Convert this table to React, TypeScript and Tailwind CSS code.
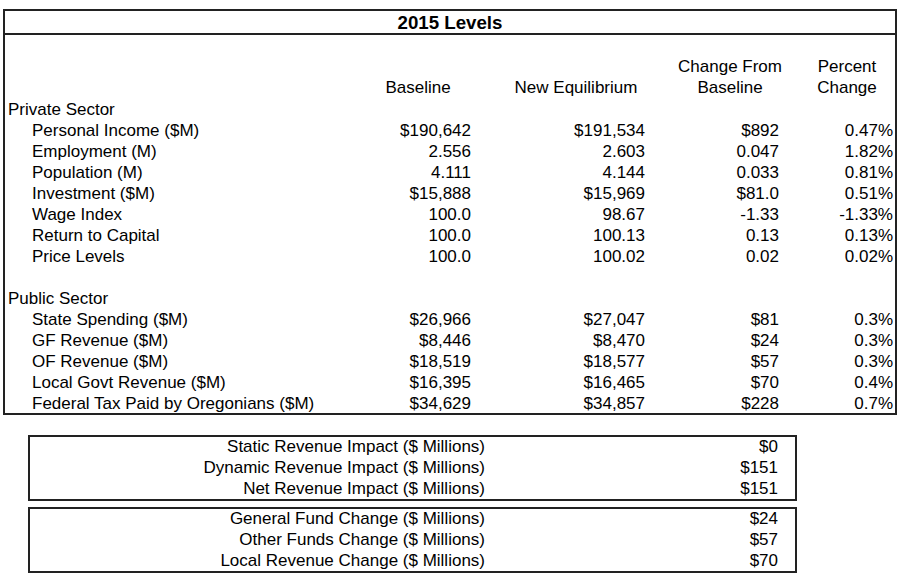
import React from "react";

type Row = { label: string; base: string; eq: string; diff: string; pct: string };

const privateRows: Row[] = [
  { label: "Personal Income ($M)", base: "$190,642", eq: "$191,534", diff: "$892", pct: "0.47%" },
  { label: "Employment (M)", base: "2.556", eq: "2.603", diff: "0.047", pct: "1.82%" },
  { label: "Population (M)", base: "4.111", eq: "4.144", diff: "0.033", pct: "0.81%" },
  { label: "Investment ($M)", base: "$15,888", eq: "$15,969", diff: "$81.0", pct: "0.51%" },
  { label: "Wage Index", base: "100.0", eq: "98.67", diff: "-1.33", pct: "-1.33%" },
  { label: "Return to Capital", base: "100.0", eq: "100.13", diff: "0.13", pct: "0.13%" },
  { label: "Price Levels", base: "100.0", eq: "100.02", diff: "0.02", pct: "0.02%" },
];

const publicRows: Row[] = [
  { label: "State Spending ($M)", base: "$26,966", eq: "$27,047", diff: "$81", pct: "0.3%" },
  { label: "GF Revenue ($M)", base: "$8,446", eq: "$8,470", diff: "$24", pct: "0.3%" },
  { label: "OF Revenue ($M)", base: "$18,519", eq: "$18,577", diff: "$57", pct: "0.3%" },
  { label: "Local Govt Revenue ($M)", base: "$16,395", eq: "$16,465", diff: "$70", pct: "0.4%" },
  { label: "Federal Tax Paid by Oregonians ($M)", base: "$34,629", eq: "$34,857", diff: "$228", pct: "0.7%" },
];

const revenueImpact = [
  ["Static Revenue Impact ($ Millions)", "$0"],
  ["Dynamic Revenue Impact ($ Millions)", "$151"],
  ["Net Revenue Impact ($ Millions)", "$151"],
];

const fundChanges = [
  ["General Fund Change ($ Millions)", "$24"],
  ["Other Funds Change ($ Millions)", "$57"],
  ["Local Revenue Change ($ Millions)", "$70"],
];

const DataRow = ({ row }: { row: Row }) => (
  <div className="grid grid-cols-[375px_91px_174px_134px_114px] h-[21px] whitespace-nowrap">
    <div className="pl-[27px]">{row.label}</div>
    <div className="text-right">{row.base}</div>
    <div className="text-right">{row.eq}</div>
    <div className="text-right">{row.diff}</div>
    <div className="text-right">{row.pct}</div>
  </div>
);

const SummaryBox = ({ items, className }: { items: string[][]; className?: string }) => (
  <div className={`ml-[28px] w-[769px] h-[66px] border-2 border-[#222] ${className ?? ""}`}>
    <div className="-mt-[1px]">
      {items.map(([label, value]) => (
        <div key={label} className="grid grid-cols-[455px_293px] h-[21px] whitespace-nowrap">
          <div className="text-right">{label}</div>
          <div className="text-right">{value}</div>
        </div>
      ))}
    </div>
  </div>
);

export default function App() {
  return (
    <div
      className="w-[900px] h-[581px] bg-white text-black text-[17px] leading-[21px] pt-[9px] overflow-hidden"
      style={{ fontFamily: '"Liberation Sans", Arial, sans-serif' }}
    >
      <div className="ml-[3px] w-[894px] border-2 border-[#222]">
        <div className="h-[24px] border-b-2 border-[#222] flex items-center justify-center font-bold text-[18.7px]">
          2015 Levels
        </div>

        <div className="h-[64px] pb-[1px] grid grid-cols-[357px_112px_204px_104px_18px_94px] items-end whitespace-nowrap">
          <div />
          <div className="text-center">Baseline</div>
          <div className="text-center">New Equilibrium</div>
          <div className="text-center">
            Change From
            <br />
            Baseline
          </div>
          <div />
          <div className="text-center">
            Percent
            <br />
            Change
          </div>
        </div>

        <div className="h-[314px]">
          <div className="pl-[3px] h-[21px]">Private Sector</div>
          {privateRows.map((r) => (
            <DataRow key={r.label} row={r} />
          ))}
          <div className="h-[21px]" />
          <div className="pl-[3px] h-[21px]">Public Sector</div>
          {publicRows.map((r) => (
            <DataRow key={r.label} row={r} />
          ))}
        </div>
      </div>

      <SummaryBox items={revenueImpact} className="mt-[20px]" />
      <SummaryBox items={fundChanges} className="mt-[6px]" />
    </div>
  );
}
